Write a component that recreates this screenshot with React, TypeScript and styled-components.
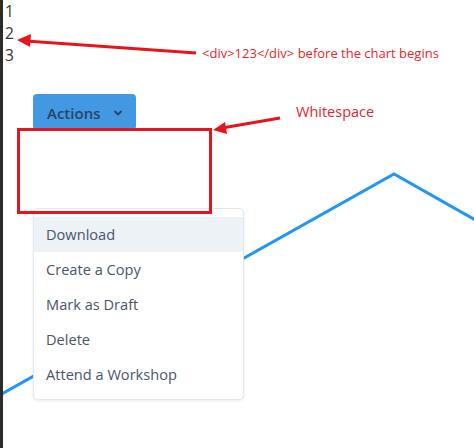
import styled, { createGlobalStyle } from 'styled-components';

const GlobalStyle = createGlobalStyle`
  html, body {
    margin: 0;
    padding: 0;
    background: #fff;
  }
  body {
    font-family: 'Open Sans', 'Noto Sans', sans-serif;
  }
`;

const Page = styled.div`
  position: relative;
  width: 474px;
  height: 448px;
  box-sizing: border-box;
  border-left: 3px solid #2b2b2b;
  overflow: hidden;
`;

const Numbers = styled.div`
  position: relative;
  z-index: 2;
  padding: 0 0 0 2px;
  font-size: 15.5px;
  line-height: 22px;
  color: #333;
`;

const Dropdown = styled.div`
  position: relative;
  z-index: 2;
  margin: 28px 0 0 30px;
  width: 211px;
`;

const Trigger = styled.button`
  display: flex;
  align-items: center;
  gap: 13px;
  height: 36px;
  padding: 2px 13px 0 14px;
  border: none;
  border-radius: 4px;
  background: #4299e1;
  color: #2a4365;
  font-family: 'Open Sans', 'Noto Sans', sans-serif;
  font-size: 15px;
  font-weight: 600;
  cursor: pointer;
  svg {
    width: 10px;
    height: 10px;
  }
`;

const Menu = styled.ul`
  position: absolute;
  top: 114px;
  left: 0;
  width: 211px;
  margin: 0;
  padding: 8px 0 7px;
  list-style: none;
  background: #fff;
  border: 1px solid #e2e8f0;
  border-radius: 5px;
  box-shadow: 0 1px 3px rgba(0, 0, 0, 0.08);
  box-sizing: border-box;
`;

const Item = styled.li<{ $active?: boolean }>`
  height: 35px;
  line-height: 35px;
  padding: 0 12px;
  font-size: 14.6px;
  color: #4a5568;
  background: ${(p) => (p.$active ? '#edf2f7' : 'transparent')};
`;

const Layer = styled.svg<{ $z: number }>`
  position: absolute;
  top: 0;
  left: -3px;
  z-index: ${(p) => p.$z};
  pointer-events: none;
`;

const Note = styled.span<{ $x: number; $y: number; $size: number }>`
  position: absolute;
  z-index: 4;
  left: ${(p) => p.$x}px;
  top: ${(p) => p.$y}px;
  font-family: 'Open Sans', 'Noto Sans', sans-serif;
  font-size: ${(p) => p.$size}px;
  color: #e8262b;
  white-space: nowrap;
`;

const items = ['Download', 'Create a Copy', 'Mark as Draft', 'Delete', 'Attend a Workshop'];

const Chevron = () => (
  <svg viewBox='0 0 10 10'>
    <path d='M2 3.5 L5 6.5 L8 3.5' fill='none' stroke='#2a4365' strokeWidth='1.8' strokeLinecap='round' strokeLinejoin='round' />
  </svg>
);

export default function App() {
  return (
    <>
      <GlobalStyle />
      <Page>
        <Layer width='477' height='448' $z={1}>
          <polyline points='0,395 394,174 477,221' fill='none' stroke='#2196f3' strokeWidth='3' />
        </Layer>
        <Numbers>
          <div>1</div>
          <div>2</div>
          <div>3</div>
        </Numbers>
        <Dropdown>
          <Trigger>
            Actions
            <Chevron />
          </Trigger>
          <Menu>
            {items.map((label, i) => (
              <Item key={label} $active={i === 0}>
                {label}
              </Item>
            ))}
          </Menu>
        </Dropdown>
        <Layer width='477' height='448' $z={3}>
          <rect x='18.5' y='129.5' width='192' height='83' fill='none' stroke='#e8141c' strokeWidth='3' />
          <line x1='196' y1='53' x2='26' y2='41' stroke='#e8141c' strokeWidth='3' />
          <polygon points='17,40 31,34 30,47' fill='#e8141c' />
          <line x1='280' y1='118' x2='222' y2='128' stroke='#e8141c' strokeWidth='3' />
          <polygon points='213,130 225,122 227,134' fill='#e8141c' />
        </Layer>
        <Note $x={199} $y={44} $size={13}>
          &lt;div&gt;123&lt;/div&gt; before the chart begins
        </Note>
        <Note $x={293} $y={102} $size={14.5}>
          Whitespace
        </Note>
      </Page>
    </>
  );
}
